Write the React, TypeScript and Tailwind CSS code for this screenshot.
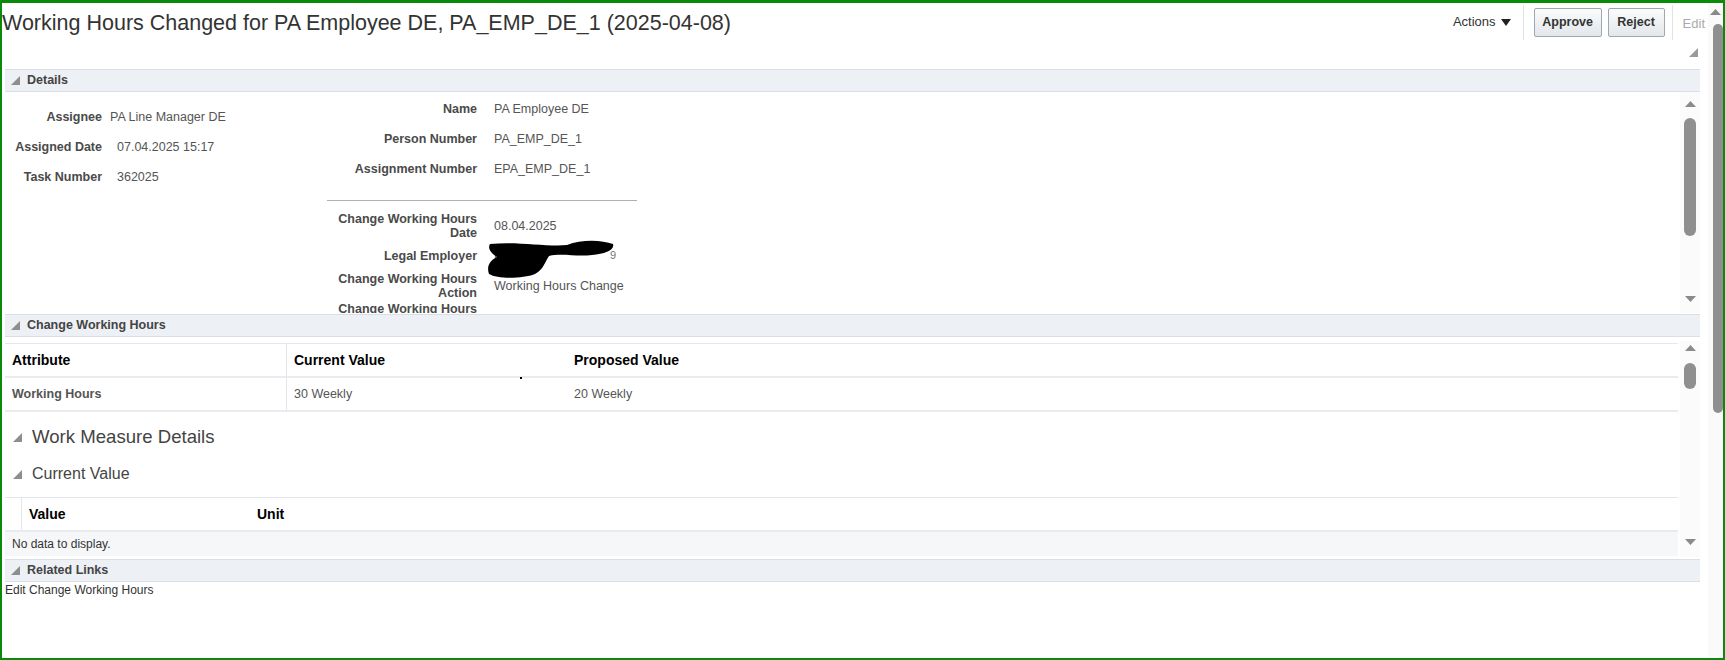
import React from 'react';

const Tri: React.FC<{ size?: number; color?: string }> = ({ size = 9, color = '#8e8e8e' }) => (
  <svg width={size} height={size} viewBox="0 0 10 10" className="shrink-0">
    <polygon points="10,0 10,10 0,10" fill={color} />
  </svg>
);

const Arrow: React.FC<{ up?: boolean }> = ({ up }) => (
  <svg width="11" height="6" viewBox="0 0 11 6" className="shrink-0">
    <polygon points={up ? '5.5,0 11,6 0,6' : '0,0 11,0 5.5,6'} fill="#8a8a8a" />
  </svg>
);

const SectionBar: React.FC<{ title: string }> = ({ title }) => (
  <div className="h-[23px] flex items-center gap-[7px] pl-[6px] bg-[#edf0f5] border-t border-b border-[#dadee5] text-[12.5px] font-bold text-[#444]">
    <Tri />
    <span>{title}</span>
  </div>
);

const InnerScroll: React.FC<{ pt: number; gap: number; thumb: number; pb: number }> = ({ pt, gap, thumb, pb }) => (
  <div
    className="w-[20px] shrink-0 bg-[#fbfbfb] flex flex-col items-center"
    style={{ paddingTop: pt, paddingBottom: pb }}
  >
    <Arrow up />
    <div className="w-[12px] rounded-full bg-[#8f8f8f]" style={{ marginTop: gap, height: thumb }} />
    <div className="flex-1" />
    <Arrow />
  </div>
);

const leftRows = [
  { label: 'Assignee', value: 'PA Line Manager DE', ml: 'ml-[8px]' },
  { label: 'Assigned Date', value: '07.04.2025 15:17', ml: 'ml-[15px]' },
  { label: 'Task Number', value: '362025', ml: 'ml-[15px]' },
];

const topRight = [
  { label: 'Name', value: 'PA Employee DE' },
  { label: 'Person Number', value: 'PA_EMP_DE_1' },
  { label: 'Assignment Number', value: 'EPA_EMP_DE_1' },
];

const App: React.FC = () => {
  return (
    <div className="w-[1725px] h-[660px] border-2 border-t-[3px] border-[#0a8a0a] bg-white flex overflow-hidden font-['Liberation_Sans',Arial,sans-serif] text-[#333]">
      <div className="flex-1 min-w-0 flex flex-col">
        {/* header */}
        <div className="h-[42px] flex justify-between items-start">
          <h1 className="mt-[8px] text-[21.5px] leading-[24px] text-[#333] whitespace-nowrap">
            Working Hours Changed for PA Employee DE, PA_EMP_DE_1 (2025-04-08)
          </h1>
          <div className="flex items-start">
            <div className="mt-[11px] leading-[16px] text-[13px] text-[#333] flex items-center gap-[5px]">
              Actions
              <svg width="10" height="7" viewBox="0 0 10 7">
                <polygon points="0,0 10,0 5,7" fill="#222" />
              </svg>
            </div>
            <div className="ml-[12px] mt-[2px] h-[35px] w-px bg-[#e3e3e3]" />
            <button className="ml-[10px] mt-[5px] h-[29px] w-[68px] border border-[#9ea8b3] rounded-[2px] bg-gradient-to-b from-[#fafbfc] to-[#e3e7eb] text-[12.5px] font-bold text-[#333]">
              Approve
            </button>
            <button className="ml-[6px] mt-[5px] h-[29px] w-[57px] border border-[#9ea8b3] rounded-[2px] bg-gradient-to-b from-[#fafbfc] to-[#e3e7eb] text-[12.5px] font-bold text-[#333]">
              Reject
            </button>
            <div className="ml-[7px] mt-[2px] h-[35px] w-px bg-[#e3e3e3]" />
            <div className="ml-[10px] mr-[3px] mt-[13px] leading-[16px] text-[13px] text-[#aaa]">Edit</div>
          </div>
        </div>
        <div className="h-[24px] flex justify-end pr-[10px] pt-[3px]">
          <Tri color="#9a9a9a" />
        </div>

        <div className="pl-[3px] pr-[8px] flex flex-col">
          <SectionBar title="Details" />
          {/* details body */}
          <div className="flex h-[221px]">
            <div className="flex-1 min-w-0 overflow-hidden flex text-[12.5px]">
              <div className="w-[322px] pt-[10px]">
                {leftRows.map(r => (
                  <div key={r.label} className="h-[30px] flex items-center">
                    <span className="w-[97px] text-right font-bold text-[#4a4a4a]">{r.label}</span>
                    <span className={`${r.ml} text-[#555]`}>{r.value}</span>
                  </div>
                ))}
              </div>
              <div className="w-[310px] pt-[2px]">
                {topRight.map(r => (
                  <div key={r.label} className="h-[30px] flex items-center">
                    <span className="w-[150px] text-right font-bold text-[#4a4a4a]">{r.label}</span>
                    <span className="ml-[17px] text-[#555]">{r.value}</span>
                  </div>
                ))}
                <div className="mt-[16px] border-t border-[#a9b1ba]" />
                <div className="mt-[10px]">
                  <div className="h-[30px] flex items-center">
                    <span className="w-[150px] text-right font-bold text-[#4a4a4a] leading-[14px]">
                      Change Working Hours<br />Date
                    </span>
                    <span className="ml-[17px] text-[#555]">08.04.2025</span>
                  </div>
                  <div className="h-[30px] flex items-center relative">
                    <span className="w-[150px] text-right font-bold text-[#4a4a4a]">Legal Employer</span>
                    <span className="ml-[17px] text-[#555]">F</span>
                    <span className="absolute left-[283px] top-[6px] text-[#777] text-[11px]">9</span>
                    <svg width="128" height="40" viewBox="0 0 128 40" className="absolute left-[160px] top-[-1px]">
                      <path
                        d="M3,4 C30,1 60,7 80,5 C95,-1 115,0 126,4 C128,10 118,14 105,15 C90,17 75,13 62,16 C58,22 56,30 48,34 C35,39 10,39 2,34 C-1,25 4,20 10,17 C5,14 0,9 3,4 Z"
                        fill="#000"
                      />
                    </svg>
                  </div>
                  <div className="h-[30px] flex items-center">
                    <span className="w-[150px] text-right font-bold text-[#4a4a4a] leading-[14px]">
                      Change Working Hours<br />Action
                    </span>
                    <span className="ml-[17px] text-[#555]">Working Hours Change</span>
                  </div>
                  <div className="h-[30px] flex items-start pt-[1px]">
                    <span className="w-[150px] text-right font-bold text-[#4a4a4a] leading-[14px]">
                      Change Working Hours<br />Reason
                    </span>
                  </div>
                </div>
              </div>
            </div>
            <InnerScroll pt={9} gap={11} thumb={118} pb={11} />
          </div>

          <div className="mt-[1px]">
            <SectionBar title="Change Working Hours" />
          </div>

          {/* scroll area */}
          <div className="mt-[4px] flex h-[216px]">
            <div className="flex-1 min-w-0 overflow-hidden pr-[2px]">
              <div className="mt-[2px] border-t border-[#e3e7ed] relative">
                <div className="h-[34px] flex items-center text-[14px] font-bold text-black border-b-2 border-[#e8ebf0]">
                  <div className="w-[282px] h-full flex items-center pl-[7px] border-r border-[#e3e7ed]">Attribute</div>
                  <div className="w-[280px] pl-[7px]">Current Value</div>
                  <div className="pl-[7px]">Proposed Value</div>
                </div>
                <div className="h-[34px] flex items-center text-[12.5px] border-b-2 border-[#e8ebf0]">
                  <div className="w-[282px] h-full flex items-center pl-[7px] border-r border-[#e3e7ed] font-bold text-[#555]">
                    Working Hours
                  </div>
                  <div className="w-[280px] pl-[7px] text-[#555]">30 Weekly</div>
                  <div className="pl-[7px] text-[#555]">20 Weekly</div>
                </div>
                <span className="absolute left-[515px] top-[33px] w-[2px] h-[2px] bg-black" />
              </div>

              <div className="mt-[12px] h-[26px] flex items-center gap-[10px] pl-[8px]">
                <Tri color="#8e8e8e" />
                <span className="text-[18.6px] text-[#444]">Work Measure Details</span>
              </div>
              <div className="mt-[13px] h-[22px] flex items-center gap-[10px] pl-[8px]">
                <Tri color="#8e8e8e" />
                <span className="text-[16px] text-[#444]">Current Value</span>
              </div>
              <div className="mt-[12px] border-t border-[#e3e7ed]">
                <div className="h-[34px] flex items-center text-[14px] font-bold text-black border-b-2 border-[#e8ebf0]">
                  <div className="w-[17px] h-full border-r border-[#e3e7ed]" />
                  <div className="w-[228px] pl-[7px]">Value</div>
                  <div className="pl-[7px]">Unit</div>
                </div>
                <div className="h-[24px] flex items-center pl-[7px] bg-[#f6f7f9] text-[12px] text-[#333]">
                  No data to display.
                </div>
              </div>
            </div>
            <InnerScroll pt={4} gap={12} thumb={26} pb={12} />
          </div>

          <div className="mt-[2px]">
            <SectionBar title="Related Links" />
          </div>
          <div className="leading-[16px] text-[12px] text-[#333]">Edit Change Working Hours</div>
        </div>
      </div>

      {/* browser scrollbar */}
      <div className="w-[15px] shrink-0 bg-[#fafafa] flex flex-col items-center pt-[6px]">
        <Arrow up />
        <div className="mt-[9px] ml-[4px] w-[10px] h-[389px] rounded-full bg-[#8f8f8f]" />
      </div>
    </div>
  );
};

export default App;
